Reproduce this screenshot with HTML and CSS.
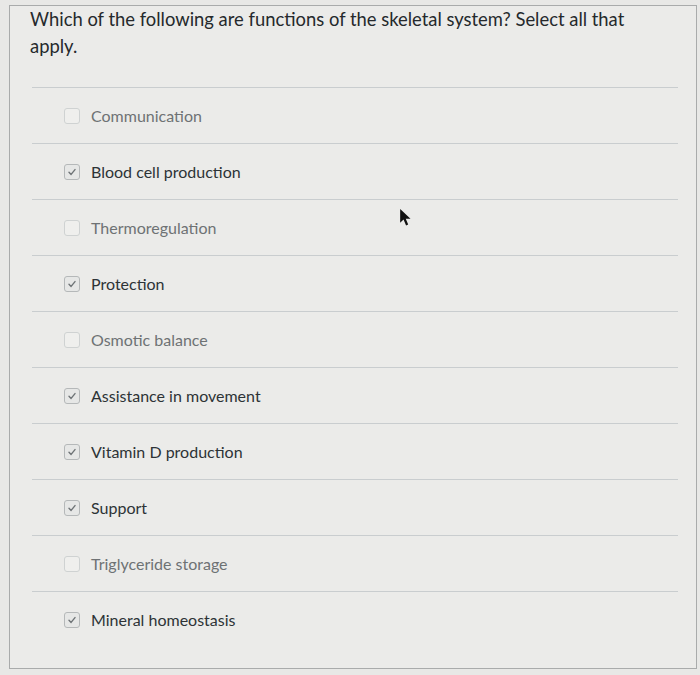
FILE: index.html
```html
<!DOCTYPE html>
<html>
<head>
<meta charset="utf-8">
<link rel="stylesheet" href="styles.css">
</head>
<body>
<div class="frame">
  <div class="question">Which of the following are functions of the skeletal system? Select all that apply.</div>
  <ul class="answers">
    <li class="answer"><span class="box"></span><span class="label muted">Communication</span></li>
    <li class="answer"><span class="box checked"><svg viewBox="0 0 14 14"><path d="M4 7.2 L6.1 9.4 L10 4.6"/></svg></span><span class="label">Blood cell production</span></li>
    <li class="answer"><span class="box"></span><span class="label muted">Thermoregulation</span></li>
    <li class="answer"><span class="box checked"><svg viewBox="0 0 14 14"><path d="M4 7.2 L6.1 9.4 L10 4.6"/></svg></span><span class="label">Protection</span></li>
    <li class="answer"><span class="box"></span><span class="label muted">Osmotic balance</span></li>
    <li class="answer"><span class="box checked"><svg viewBox="0 0 14 14"><path d="M4 7.2 L6.1 9.4 L10 4.6"/></svg></span><span class="label">Assistance in movement</span></li>
    <li class="answer"><span class="box checked"><svg viewBox="0 0 14 14"><path d="M4 7.2 L6.1 9.4 L10 4.6"/></svg></span><span class="label">Vitamin D production</span></li>
    <li class="answer"><span class="box checked"><svg viewBox="0 0 14 14"><path d="M4 7.2 L6.1 9.4 L10 4.6"/></svg></span><span class="label">Support</span></li>
    <li class="answer"><span class="box"></span><span class="label muted">Triglyceride storage</span></li>
    <li class="answer"><span class="box checked"><svg viewBox="0 0 14 14"><path d="M4 7.2 L6.1 9.4 L10 4.6"/></svg></span><span class="label">Mineral homeostasis</span></li>
  </ul>
  <svg class="cursor" viewBox="0 0 14 18"><path d="M1 1 L1 14 L4.2 11 L6.6 16.5 L8.6 15.6 L6.3 10.2 L10.8 10.2 Z"/></svg>
</div>
</body>
</html>
```

FILE: styles.css
```css
html, body {
  margin: 0;
  padding: 0;
  background: #e8e8e6;
}
body {
  font-family: Lato, "Liberation Sans", sans-serif;
  color: #2d3b45;
}
.frame {
  position: relative;
  margin: 5px 0 0 9px;
  width: 688px;
  height: 664px;
  border: 1px solid #a9abab;
  background: #ebebe9;
  box-sizing: border-box;
}
.question {
  padding: 0 40px 0 20px;
  font-size: 18.4px;
  line-height: 27px;
  color: #25292c;
}
.answers {
  list-style: none;
  margin: 27px 18px 0 22px;
  padding: 0;
  border-top: 1px solid #c9cdcf;
}
.answer {
  display: flex;
  align-items: center;
  height: 55px;
  padding-left: 32px;
  border-bottom: 1px solid #c9cdcf;
}
.answer:last-child {
  border-bottom: none;
}
.box {
  width: 14px;
  height: 14px;
  border: 1px solid #cfd2d2;
  border-radius: 3px;
  background: #efefed;
  margin-right: 11px;
  display: flex;
  align-items: center;
  justify-content: center;
}
.box.checked {
  border-color: #b5b8b9;
  background: #e6e7e6;
}
.box svg {
  width: 14px;
  height: 14px;
}
.box svg path {
  fill: none;
  stroke: #6f7477;
  stroke-width: 1.4;
  stroke-linecap: round;
  stroke-linejoin: round;
}
.label {
  font-size: 16px;
  color: #2d3336;
}
.label.muted {
  color: #6e7274;
}
.cursor {
  position: absolute;
  left: 389px;
  top: 202px;
  width: 15px;
  height: 19px;
}
.cursor path {
  fill: #111;
}
```
